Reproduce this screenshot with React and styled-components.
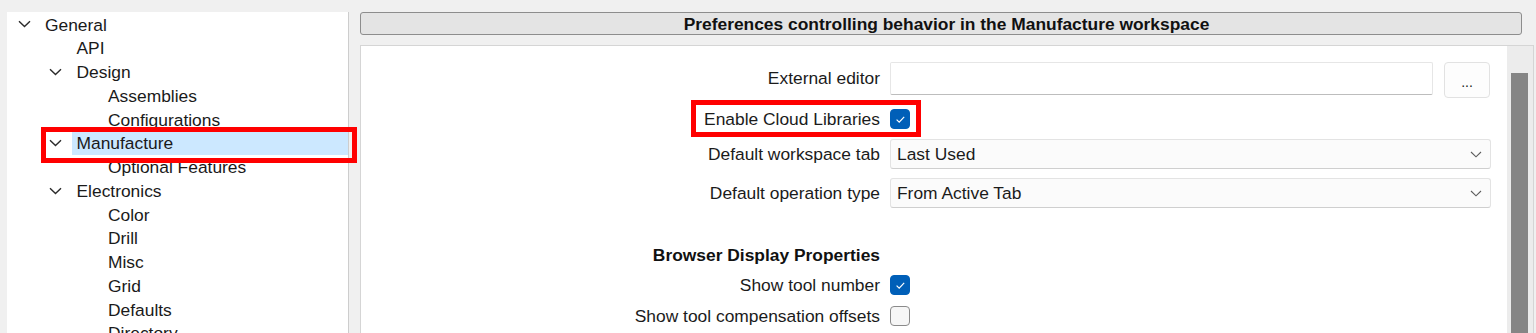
import React from 'react';
import styled, { createGlobalStyle } from 'styled-components';

const GlobalStyle = createGlobalStyle`
  html, body {
    margin: 0;
    padding: 0;
    background: #f0f0f0;
  }
  body {
    font-family: "Liberation Sans", Arial, sans-serif;
    color: #1b1b1b;
  }
`;

const treeItems = [
  { label: 'General', level: 0, expanded: true },
  { label: 'API', level: 1 },
  { label: 'Design', level: 1, expanded: true },
  { label: 'Assemblies', level: 2 },
  { label: 'Configurations', level: 2 },
  { label: 'Manufacture', level: 1, expanded: true, selected: true },
  { label: 'Optional Features', level: 2 },
  { label: 'Electronics', level: 1, expanded: true },
  { label: 'Color', level: 2 },
  { label: 'Drill', level: 2 },
  { label: 'Misc', level: 2 },
  { label: 'Grid', level: 2 },
  { label: 'Defaults', level: 2 },
  { label: 'Directory', level: 2 },
  { label: 'Layers', level: 2 },
];

function Chevron() {
  return (
    <svg width='13' height='8' viewBox='0 0 13 8'>
      <path d='M1 1.2l5.5 5.4L12 1.2' fill='none' stroke='#2b2b2b' strokeWidth='1.4' />
    </svg>
  );
}

function DropChevron() {
  return (
    <svg width='12' height='7' viewBox='0 0 12 7'>
      <path d='M1 1l5 4.8L11 1' fill='none' stroke='#5c5c5c' strokeWidth='1.1' />
    </svg>
  );
}

function Check({ checked }) {
  return (
    <CheckBox $checked={checked}>
      {checked && (
        <svg width='11' height='9' viewBox='0 0 11 9'>
          <path d='M1.6 4.6l2.6 2.5 5-5.3' fill='none' stroke='#ffffff' strokeWidth='1.2' />
        </svg>
      )}
    </CheckBox>
  );
}

export default function App() {
  return (
    <>
      <GlobalStyle />
      <Page>
        <Tree>
          {treeItems.map((item) => (
            <TreeRow key={item.label} $level={item.level}>
              <ChevronSlot>{item.expanded && <Chevron />}</ChevronSlot>
              <TreeLabel $selected={item.selected}>{item.label}</TreeLabel>
            </TreeRow>
          ))}
        </Tree>

        <Main>
          <TitleBar>Preferences controlling behavior in the Manufacture workspace</TitleBar>

          <Panel>
            <Form>
              <Row $top={16} $align='start'>
                <Label $lh={33}>External editor</Label>
                <Controls>
                  <TextInput />
                  <BrowseButton>...</BrowseButton>
                </Controls>
              </Row>

              <Row $top={11}>
                <Label>Enable Cloud Libraries</Label>
                <Check checked />
              </Row>

              <Row $top={10}>
                <Label>Default workspace tab</Label>
                <Select>
                  <span>Last Used</span>
                  <DropChevron />
                </Select>
              </Row>

              <Row $top={9}>
                <Label>Default operation type</Label>
                <Select>
                  <span>From Active Tab</span>
                  <DropChevron />
                </Select>
              </Row>

              <Row $top={35}>
                <Heading>Browser Display Properties</Heading>
              </Row>

              <Row $top={8}>
                <Label>Show tool number</Label>
                <Check checked />
              </Row>

              <Row $top={11}>
                <Label>Show tool compensation offsets</Label>
                <Check />
              </Row>
            </Form>

            <ScrollTrack>
              <ScrollThumb />
            </ScrollTrack>
          </Panel>
        </Main>

        <Callout $left={41} $top={127} $width={316} $height={36} />
        <Callout $left={691} $top={100} $width={230} $height={37} />
      </Page>
    </>
  );
}

const Page = styled.div`
  position: relative;
  display: flex;
  gap: 11px;
  height: 333px;
  box-sizing: border-box;
  padding: 12px 0 0 7px;
  overflow: hidden;
  font-size: 17.4px;
`;

const Tree = styled.div`
  width: 342px;
  flex-shrink: 0;
  box-sizing: border-box;
  padding-top: 0.5px;
  background: #ffffff;
  border-right: 1px solid #cdcdcd;
  display: flex;
  flex-direction: column;
`;

const TreeRow = styled.div`
  display: flex;
  align-items: center;
  height: 23.75px;
  flex-shrink: 0;
  padding-left: ${(p) => 5 + p.$level * 31.5}px;
`;

const ChevronSlot = styled.div`
  width: 24px;
  height: 100%;
  display: flex;
  align-items: center;
  justify-content: center;
  margin-right: 4.5px;
`;

const TreeLabel = styled.div`
  flex: 1;
  height: 100%;
  box-sizing: border-box;
  padding: 1px 0 0 4.5px;
  line-height: 23.75px;
  color: #1a1a1a;
  white-space: nowrap;

  ${(p) =>
    p.$selected &&
    `
    background: #cce8ff;
  `}
`;

const Main = styled.div`
  width: 1174px;
  flex-shrink: 0;
  display: flex;
  flex-direction: column;
  gap: 10px;
`;

const TitleBar = styled.div`
  width: 1162px;
  height: 23px;
  box-sizing: border-box;
  border: 1px solid #8d8d8d;
  border-radius: 3px;
  background: #e4e4e4;
  font-weight: bold;
  text-align: center;
  line-height: 22px;
  padding-left: 11px;
  color: #111111;
`;

const Panel = styled.div`
  flex: 1;
  display: flex;
  background: #ffffff;
  border: 1px solid #d5d5d5;
  border-bottom: none;
`;

const Form = styled.div`
  flex: 1;
  display: flex;
  flex-direction: column;
  padding: 0 16px 0 0;
`;

const Row = styled.div`
  display: grid;
  grid-template-columns: 519px 601px;
  column-gap: 10px;
  align-items: ${(p) => p.$align || 'center'};
  margin-top: ${(p) => p.$top}px;
`;

const Label = styled.div`
  text-align: right;
  white-space: nowrap;
  line-height: ${(p) => p.$lh || 20}px;
`;

const Heading = styled.div`
  text-align: right;
  font-weight: bold;
  line-height: 24px;
  color: #111111;
`;

const Controls = styled.div`
  display: flex;
  align-items: flex-start;
  gap: 11px;
`;

const TextInput = styled.div`
  width: 543px;
  height: 33px;
  box-sizing: border-box;
  background: #ffffff;
  border: 1px solid #e6e6e6;
  border-bottom-color: #bdbdbd;
  border-radius: 2px;
`;

const BrowseButton = styled.div`
  width: 46px;
  height: 36px;
  box-sizing: border-box;
  border: 1px solid #e2e2e2;
  border-radius: 4px;
  background: #fdfdfd;
  display: flex;
  align-items: center;
  justify-content: center;
  font-size: 14px;
  padding-top: 3px;
`;

const Select = styled.div`
  height: 30px;
  box-sizing: border-box;
  display: flex;
  align-items: center;
  justify-content: space-between;
  padding: 0 8px 0 6px;
  background: #fbfbfb;
  border: 1px solid #e3e3e3;
  border-bottom-color: #cfcfcf;
  border-radius: 3px;
`;

const CheckBox = styled.div`
  width: 20px;
  height: 20px;
  box-sizing: border-box;
  border-radius: 4px;
  display: flex;
  align-items: center;
  justify-content: center;
  background: #f6f6f6;
  border: 1px solid #8a8a8a;

  ${(p) =>
    p.$checked &&
    `
    background: #005fb8;
    border-color: #005fb8;
  `}
`;

const ScrollTrack = styled.div`
  width: 26px;
  flex-shrink: 0;
  background: #ececec;
  box-sizing: border-box;
  padding: 27px 0 0 4px;
`;

const ScrollThumb = styled.div`
  width: 17px;
  height: 400px;
  background: #858585;
`;

const Callout = styled.div`
  position: absolute;
  left: ${(p) => p.$left}px;
  top: ${(p) => p.$top}px;
  width: ${(p) => p.$width}px;
  height: ${(p) => p.$height}px;
  box-sizing: border-box;
  border: 5px solid #ff0000;
  pointer-events: none;
`;
